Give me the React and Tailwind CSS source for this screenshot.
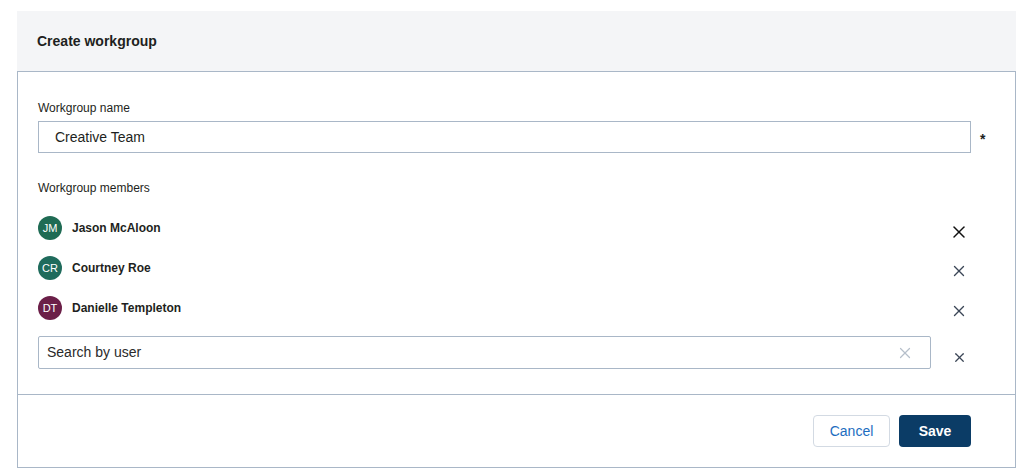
import { X } from 'lucide-react';

const members = [
  { id: 1, initials: 'JM', name: 'Jason McAloon', color: 'bg-[#1f6b54]', icon: 'w-[20px] h-[20px] text-[#111]', pt: 'pt-[7px]' },
  { id: 2, initials: 'CR', name: 'Courtney Roe', color: 'bg-[#1f6b5c]', icon: 'w-[18px] h-[18px] text-[#3b4656]', pt: 'pt-[6px]' },
  { id: 3, initials: 'DT', name: 'Danielle Templeton', color: 'bg-[#6b1f48]', icon: 'w-[18px] h-[18px] text-[#3b4656]', pt: 'pt-[6px]' },
];

const App = () => {
  return (
    <div className="min-h-screen bg-white pt-[11px] pl-[17px] font-['Liberation_Sans',Arial,sans-serif] text-[#1e1f21]">
      <div className="w-[999px]">
        <div className="h-[60px] bg-[#f4f5f7] pl-[20px] flex items-center">
          <h1 className="text-[14px] font-bold">Create workgroup</h1>
        </div>

        <div className="border border-[#a9b7c7] w-[999px]">
          <div className="pl-[20px] pt-[29px] pb-[25px]">
            <label className="block text-[12px] leading-[15px] mb-[5px]">Workgroup name</label>
            <div className="flex items-center">
              <input
                defaultValue="Creative Team"
                className="w-[933px] h-[32px] border border-[#a9b7c7] pl-[16px] text-[14px] text-[#1e1f21] outline-none"
              />
              <span className="ml-[9px] text-[14px] font-bold leading-none pt-[3px]">*</span>
            </div>

            <div className="text-[12px] leading-[15px] mt-[28px] mb-[12px]">Workgroup members</div>

            {members.map((m) => (
              <div key={m.id} className="w-[933px] h-[40px] flex items-center justify-between">
                <div className="flex items-center">
                  <div className={`w-[24px] h-[24px] rounded-full ${m.color} text-white text-[11px] flex items-center justify-center`}>
                    {m.initials}
                  </div>
                  <span className="ml-[10px] text-[12px] font-bold">{m.name}</span>
                </div>
                <div className={`w-[24px] flex justify-center ${m.pt}`}>
                  <X className={m.icon} strokeWidth={1.8} />
                </div>
              </div>
            ))}

            <div className="w-[933px] flex items-center justify-between mt-[8px]">
              <div className="w-[893px] h-[33px] border border-[#a9b7c7] rounded-[2px] flex items-center justify-between pl-[8px] pr-[16px]">
                <span className="text-[14px] text-[#2a2a2a]">Search by user</span>
                <X className="w-[18px] h-[18px] text-[#b6bfca]" strokeWidth={1.6} />
              </div>
              <div className="w-[24px] flex justify-center pt-[9px]">
                <X className="w-[15px] h-[15px] text-[#3b4656]" strokeWidth={2} />
              </div>
            </div>
          </div>

          <div className="border-t border-[#a9b7c7] h-[73px] flex items-center justify-end pr-[44px] gap-[9px]">
            <button className="w-[77px] h-[32px] border border-[#d3dae3] rounded-[4px] text-[14px] text-[#1d6dbf] bg-white">
              Cancel
            </button>
            <button className="w-[72px] h-[32px] rounded-[4px] text-[14px] font-bold text-white bg-[#0b3c66]">
              Save
            </button>
          </div>
        </div>
      </div>
    </div>
  );
};

export default App;
